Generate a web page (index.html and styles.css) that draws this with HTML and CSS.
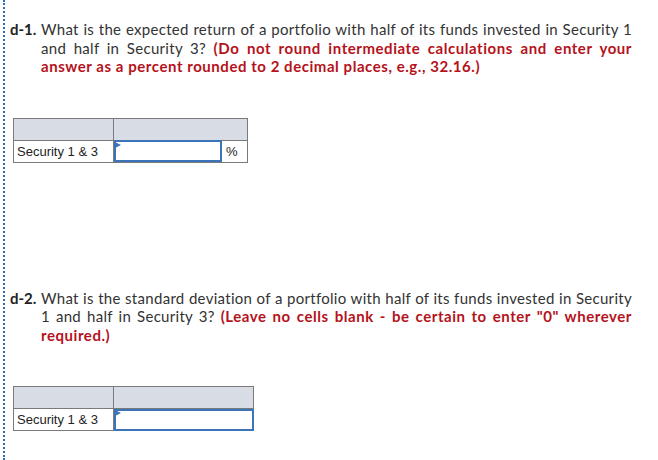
FILE: index.html
```html
<!DOCTYPE html>
<html>
<head>
<meta charset="utf-8">
<link rel="stylesheet" href="styles.css">
</head>
<body>
<div class="page">
  <div class="question q1">
    <div class="qlabel">d-1.</div>
    <div class="qtext">What is the expected return of a portfolio with half of its funds invested in Security 1 and half in Security 3? <span class="hint">(Do not round intermediate calculations and enter your answer as a percent rounded to 2 decimal places, e.g., 32.16.)</span></div>
  </div>
  <table class="grid g1">
    <tr class="head"><td class="c1"></td><td class="c2" colspan="2"></td></tr>
    <tr class="body"><td class="c1 lbl">Security 1 &amp; 3</td><td class="c2 inp"><span class="flag"></span></td><td class="c3 unit">%</td></tr>
  </table>
  <div class="question q2">
    <div class="qlabel">d-2.</div>
    <div class="qtext">What is the standard deviation of a portfolio with half of its funds invested in Security 1 and half in Security 3? <span class="hint">(Leave no cells blank - be certain to enter "0" wherever required.)</span></div>
  </div>
  <table class="grid g2">
    <tr class="head"><td class="c1"></td><td class="c2w"></td></tr>
    <tr class="body"><td class="c1 lbl">Security 1 &amp; 3</td><td class="c2w inp"><span class="flag"></span></td></tr>
  </table>
</div>
</body>
</html>
```
FILE: styles.css
```css
html, body { margin: 0; padding: 0; background: #fff; }
.page {
  margin-left: 3px;
  border-left: 2px dotted #2f6fba;
  padding-left: 5px;
  height: 460px;
  box-sizing: border-box;
  padding-top: 20px;
}
.question {
  display: flex;
  font-family: "Lato", "Liberation Sans", sans-serif;
  font-size: 15px;
  line-height: 18.5px;
  color: #333;
  width: 622px;
  letter-spacing: 0.3px;
}
.qlabel { width: 31px; flex: none; font-weight: 700; color: #222; letter-spacing: 0; }
.qtext { flex: 1; text-align: justify; }
.hint { color: #b5121b; font-weight: 700; letter-spacing: 0.55px; }
.grid {
  border-collapse: collapse;
  margin-left: 3px;
  font-family: "Liberation Sans", Arial, sans-serif;
  font-size: 13px;
  color: #222;
}
.g1 { margin-top: 42px; }
.g2 { margin-top: 42px; }
.q2 { margin-top: 126px; }
.grid td { border: 1px solid #7a7a7a; padding: 0; }
.head td { background: #d8dce5; height: 21px; }
.body td { height: 21px; }
.c1 { width: 99px; }
.c2 { width: 107px; }
.c3 { width: 21px; }
.c2w { width: 139px; }
.lbl { padding-left: 3px !important; box-sizing: border-box; }
.inp { position: relative; outline: 2px solid #3b74b8; outline-offset: -2px; }
.unit { padding-left: 4px !important; }
.flag {
  position: absolute;
  left: 1px; top: 1px;
  width: 0; height: 0;
  border-left: 6px solid #3b74b8;
  border-top: 3px solid transparent;
  border-bottom: 3px solid transparent;
}
```
